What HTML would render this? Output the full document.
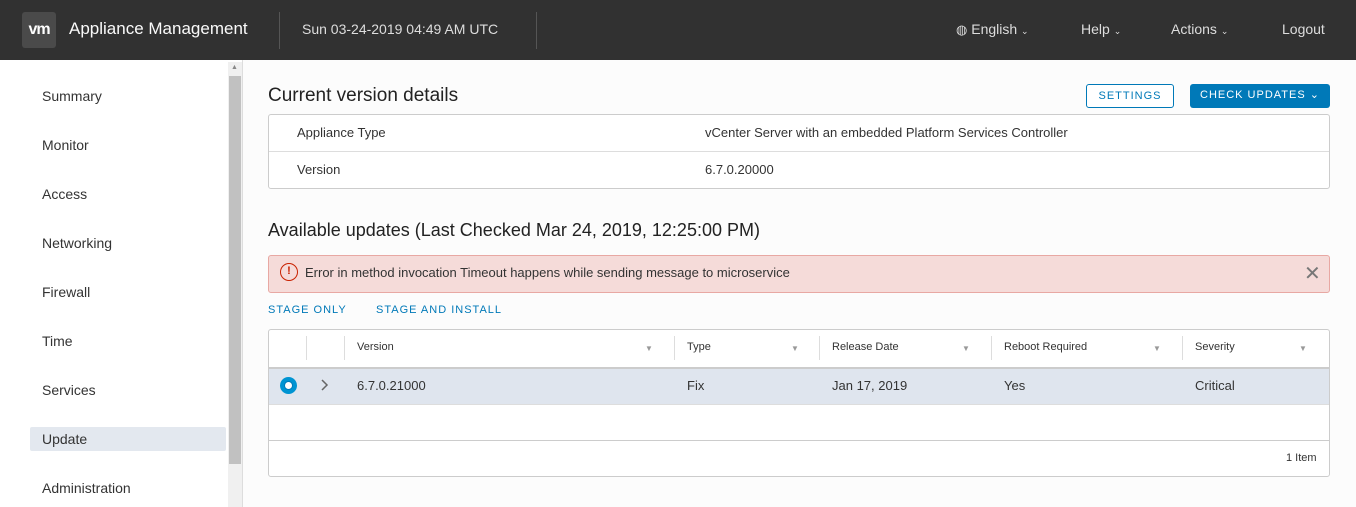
<!DOCTYPE html><html><head><style>
*{box-sizing:border-box;margin:0;padding:0}
body{width:1356px;height:507px;overflow:hidden;font-family:"Liberation Sans",sans-serif;background:#fcfcfc;position:relative;color:#333}
.hd{position:absolute;left:0;top:0;width:1356px;height:60px;background:#313131;color:#fafafa}
.a{position:absolute}
.logo{left:22px;top:12px;width:34px;height:36px;background:#4a4a4a;border-radius:3px;color:#fff;font-weight:bold;font-size:16px;text-align:center;line-height:36px;letter-spacing:-1px}
.side{left:0;top:60px;width:243px;height:447px;background:#fff;border-right:1px solid #ddd}
.nav{position:absolute;left:42px;font-size:14px;color:#333}
.sb{left:228px;top:62px;width:14px;height:445px;background:#f0f0f0}
.th{left:229px;top:76px;width:12px;height:388px;background:#c1c1c1}
.btn{font-size:11px;letter-spacing:1px;text-align:center;line-height:23px;border-radius:3px}
.box{background:#fff;border:1px solid #ccc;border-radius:3px}
.t{font-size:13px}
.hr{position:absolute;height:1px;background:#ddd}
.c{position:absolute;font-size:11px;color:#333}
.f{position:absolute;color:#999;font-size:8px}
</style></head><body>
<div class="hd">
<div class="a logo">vm</div>
<div class="a" style="left:69px;top:19px;font-size:17px">Appliance Management</div>
<div class="a" style="left:279px;top:12px;width:1px;height:37px;background:#555"></div>
<div class="a" style="left:302px;top:21px;font-size:14px;color:#ddd">Sun 03-24-2019 04:49 AM UTC</div>
<div class="a" style="left:536px;top:12px;width:1px;height:37px;background:#555"></div>
<div class="a" style="left:956px;top:21px;font-size:14px;color:#ddd"><span style="font-size:13px">◍</span> English <span style="font-size:9px">⌄</span></div>
<div class="a" style="left:1081px;top:21px;font-size:14px;color:#ddd">Help <span style="font-size:9px">⌄</span></div>
<div class="a" style="left:1171px;top:21px;font-size:14px;color:#ddd">Actions <span style="font-size:9px">⌄</span></div>
<div class="a" style="left:1282px;top:21px;font-size:14px;color:#ddd">Logout</div>
</div>
<div class="a side"></div>
<div class="a" style="left:30px;top:427px;width:196px;height:24px;background:#e3e8ef;border-radius:2px"></div>
<div class="nav" style="top:88px">Summary</div>
<div class="nav" style="top:137px">Monitor</div>
<div class="nav" style="top:186px">Access</div>
<div class="nav" style="top:235px">Networking</div>
<div class="nav" style="top:284px">Firewall</div>
<div class="nav" style="top:333px">Time</div>
<div class="nav" style="top:382px">Services</div>
<div class="nav" style="top:431px">Update</div>
<div class="nav" style="top:480px">Administration</div>
<div class="a sb"></div><div class="a th"></div>
<div class="a" style="left:231px;top:64px;font-size:7px;color:#888">▲</div>
<div class="a" style="left:268px;top:85px;font-size:19px;color:#222">Current version details</div>
<div class="a btn" style="left:1086px;top:84px;width:88px;height:24px;border:1px solid #0079b8;color:#0079b8;background:#fff">SETTINGS</div>
<div class="a btn" style="left:1190px;top:84px;width:140px;height:24px;background:#0079b8;color:#fff">CHECK UPDATES ⌄</div>
<div class="a box" style="left:268px;top:114px;width:1062px;height:75px"></div>
<div class="hr" style="left:269px;top:151px;width:1060px"></div>
<div class="a t" style="left:297px;top:125px">Appliance Type</div>
<div class="a t" style="left:705px;top:125px">vCenter Server with an embedded Platform Services Controller</div>
<div class="a t" style="left:297px;top:162px">Version</div>
<div class="a t" style="left:705px;top:162px">6.7.0.20000</div>
<div class="a" style="left:268px;top:220px;font-size:18px;color:#222">Available updates (Last Checked Mar 24, 2019, 12:25:00 PM)</div>
<div class="a" style="left:268px;top:255px;width:1062px;height:38px;background:#f5dbd9;border:1px solid #e8a8a3;border-radius:3px"></div>
<div class="a" style="left:280px;top:263px;width:18px;height:18px;border:1.5px solid #c92100;border-radius:50%;color:#c92100;font-size:11px;text-align:center;line-height:15px;font-weight:bold">!</div>
<div class="a t" style="left:305px;top:265px">Error in method invocation Timeout happens while sending message to microservice</div>
<div class="a" style="left:1304px;top:261px;font-size:20px;color:#777">✕</div>
<div class="a btn" style="left:268px;top:299px;color:#0079b8">STAGE ONLY</div>
<div class="a btn" style="left:376px;top:299px;color:#0079b8">STAGE AND INSTALL</div>
<div class="a box" style="left:268px;top:329px;width:1062px;height:148px"></div>
<div class="a" style="left:269px;top:367px;width:1060px;height:37px;background:#dfe5ee;border-top:2px solid #ccc"></div>
<div class="hr" style="left:269px;top:404px;width:1060px"></div>
<div class="hr" style="left:269px;top:440px;width:1060px;background:#ccc"></div>
<div class="a" style="left:306px;top:336px;width:1px;height:24px;background:#ddd"></div>
<div class="a" style="left:344px;top:336px;width:1px;height:24px;background:#ddd"></div>
<div class="a" style="left:674px;top:336px;width:1px;height:24px;background:#ddd"></div>
<div class="a" style="left:819px;top:336px;width:1px;height:24px;background:#ddd"></div>
<div class="a" style="left:991px;top:336px;width:1px;height:24px;background:#ddd"></div>
<div class="a" style="left:1182px;top:336px;width:1px;height:24px;background:#ddd"></div>
<div class="c" style="left:357px;top:341px">Version</div><div class="f" style="left:645px;top:344px">▼</div>
<div class="c" style="left:687px;top:341px">Type</div><div class="f" style="left:791px;top:344px">▼</div>
<div class="c" style="left:832px;top:341px">Release Date</div><div class="f" style="left:962px;top:344px">▼</div>
<div class="c" style="left:1004px;top:341px">Reboot Required</div><div class="f" style="left:1153px;top:344px">▼</div>
<div class="c" style="left:1195px;top:341px">Severity</div><div class="f" style="left:1299px;top:344px">▼</div>
<div class="a" style="left:280px;top:377px;width:17px;height:17px;border-radius:50%;background:#0079b8;border:4px solid #0094d2"></div>
<div class="a" style="left:285px;top:382px;width:7px;height:7px;border-radius:50%;background:#fff"></div>
<svg class="a" style="left:320px;top:379px" width="10" height="12"><path d="M2 1l5 5-5 5" fill="none" stroke="#666" stroke-width="1.5"/></svg>
<div class="a t" style="left:357px;top:378px">6.7.0.21000</div>
<div class="a t" style="left:687px;top:378px">Fix</div>
<div class="a t" style="left:832px;top:378px">Jan 17, 2019</div>
<div class="a t" style="left:1004px;top:378px">Yes</div>
<div class="a t" style="left:1195px;top:378px">Critical</div>
<div class="c" style="left:1286px;top:452px">1 Item</div>
</body></html>
